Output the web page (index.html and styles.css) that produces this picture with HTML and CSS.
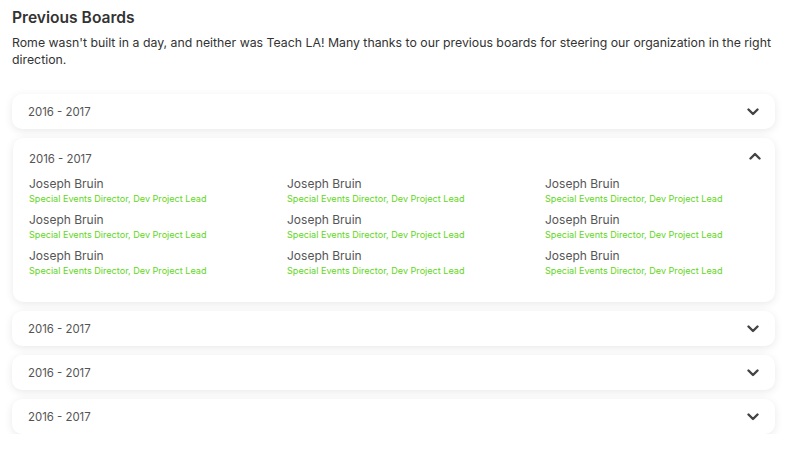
FILE: index.html
```html
<!DOCTYPE html>
<html>
<head>
  <meta charset="utf-8">
  <link rel="stylesheet" href="styles.css">
</head>
<body>
  <h2 class="title">Previous Boards</h2>
  <p class="intro">Rome wasn't built in a day, and neither was Teach LA! Many thanks to our previous boards for steering our organization in the right direction.</p>

  <div class="boards">
    <div class="board">
      <div class="board-header">
        <span class="board-year">2016 - 2017</span>
        <svg class="chevron" viewBox="0 0 12 8"><path d="M1.5 1.5 L6 6 L10.5 1.5"/></svg>
      </div>
    </div>

    <div class="board board-open">
      <div class="board-header">
        <span class="board-year">2016 - 2017</span>
        <svg class="chevron" viewBox="0 0 12 8"><path d="M1.5 6.5 L6 2 L10.5 6.5"/></svg>
      </div>
      <div class="members">
        <div class="member"><div class="member-name">Joseph Bruin</div><div class="member-role">Special Events Director, Dev Project Lead</div></div>
        <div class="member"><div class="member-name">Joseph Bruin</div><div class="member-role">Special Events Director, Dev Project Lead</div></div>
        <div class="member"><div class="member-name">Joseph Bruin</div><div class="member-role">Special Events Director, Dev Project Lead</div></div>
        <div class="member"><div class="member-name">Joseph Bruin</div><div class="member-role">Special Events Director, Dev Project Lead</div></div>
        <div class="member"><div class="member-name">Joseph Bruin</div><div class="member-role">Special Events Director, Dev Project Lead</div></div>
        <div class="member"><div class="member-name">Joseph Bruin</div><div class="member-role">Special Events Director, Dev Project Lead</div></div>
        <div class="member"><div class="member-name">Joseph Bruin</div><div class="member-role">Special Events Director, Dev Project Lead</div></div>
        <div class="member"><div class="member-name">Joseph Bruin</div><div class="member-role">Special Events Director, Dev Project Lead</div></div>
        <div class="member"><div class="member-name">Joseph Bruin</div><div class="member-role">Special Events Director, Dev Project Lead</div></div>
      </div>
    </div>

    <div class="board">
      <div class="board-header">
        <span class="board-year">2016 - 2017</span>
        <svg class="chevron" viewBox="0 0 12 8"><path d="M1.5 1.5 L6 6 L10.5 1.5"/></svg>
      </div>
    </div>

    <div class="board">
      <div class="board-header">
        <span class="board-year">2016 - 2017</span>
        <svg class="chevron" viewBox="0 0 12 8"><path d="M1.5 1.5 L6 6 L10.5 1.5"/></svg>
      </div>
    </div>

    <div class="board">
      <div class="board-header">
        <span class="board-year">2016 - 2017</span>
        <svg class="chevron" viewBox="0 0 12 8"><path d="M1.5 1.5 L6 6 L10.5 1.5"/></svg>
      </div>
    </div>
  </div>
</body>
</html>
```

FILE: styles.css
```css
body {
  margin: 0;
  padding: 8px 10px 0 12px;
  font-family: 'Inter', 'Noto Sans', sans-serif;
  background: #fff;
  color: #333;
}

.title {
  font-size: 15.6px;
  font-weight: 600;
  color: #333;
  margin: 0 0 6px;
  line-height: 20px;
}

.intro {
  font-size: 12.3px;
  line-height: 17px;
  color: #333;
  margin: 0;
}

.boards {
  margin: 26px 14px 0 0;
  display: flex;
  flex-direction: column;
  gap: 9px;
}

.board {
  background: white;
  border-radius: 10px;
  box-shadow: 0 2px 8px rgba(0,0,0,0.09);
}

.board-header {
  display: flex;
  justify-content: space-between;
  align-items: center;
  height: 35px;
  padding: 0 16px 0 16px;
}

.board-year {
  font-size: 11.4px;
  color: #555;
}

.chevron {
  width: 12px;
  height: 8px;
  fill: none;
  stroke: #444;
  stroke-width: 2.4;
  stroke-linecap: round;
  stroke-linejoin: round;
}

.board-open {
  margin: 0 0 0 1px;
  padding-bottom: 24px;
}

.board-open .board-header {
  height: 38px;
  align-items: flex-start;
  padding-top: 14px;
  box-sizing: border-box;
  padding-right: 14px;
}

.members {
  display: grid;
  grid-template-columns: repeat(3, 258px);
  row-gap: 6px;
  padding: 0 16px;
}

.member-name {
  font-size: 12px;
  line-height: 16px;
  color: #555;
}

.member-role {
  font-size: 9.1px;
  line-height: 14px;
  color: #62d61a;
}
```
